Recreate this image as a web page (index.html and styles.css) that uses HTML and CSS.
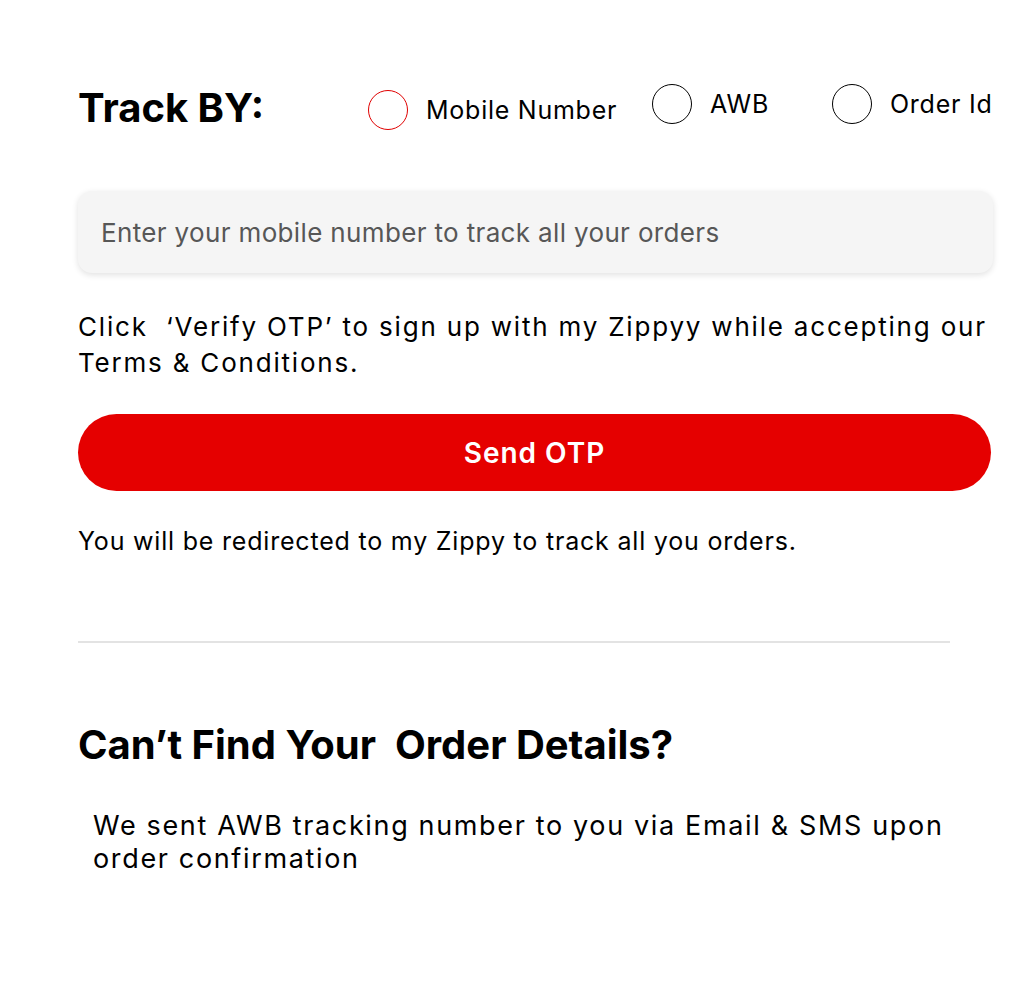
FILE: index.html
```html
<!DOCTYPE html>
<html lang="en">
<head>
<meta charset="utf-8">
<title>Track Order</title>
<link rel="stylesheet" href="styles.css">
</head>
<body>
<main class="page">
  <section class="track-row">
    <h1 class="track-title">Track BY:</h1>
    <label class="option option--mobile"><span class="radio radio--active"></span><span class="option-label">Mobile Number</span></label>
    <label class="option"><span class="radio"></span><span class="option-label">AWB</span></label>
    <label class="option"><span class="radio"></span><span class="option-label">Order Id</span></label>
  </section>

  <div class="field">
    <span class="placeholder">Enter your mobile number to track all your orders</span>
  </div>

  <p class="terms">Click &nbsp;‘Verify OTP’ to sign up with my Zippyy while accepting our Terms &amp; Conditions.</p>

  <button class="send-btn" type="button">Send OTP</button>

  <p class="redirect">You will be redirected to my Zippy to track all you orders.</p>

  <hr class="divider">

  <h2 class="help-title">Can’t Find Your &nbsp;Order Details?</h2>
  <p class="help-text">We sent AWB tracking number to you via Email &amp; SMS upon order confirmation</p>
</main>
</body>
</html>
```

FILE: styles.css
```css
* { box-sizing: border-box; }
html, body { margin: 0; padding: 0; background: #fff; }
body {
  font-family: Inter, "Noto Sans", "Liberation Sans", sans-serif;
  color: #000;
}
.page {
  padding: 84px 0 0 78px;
  width: 1000px;
}
.track-row {
  display: grid;
  grid-template-columns: 290px 284px 180px auto;
  align-items: start;
}
.track-title {
  margin: 0;
  font-size: 40px;
  line-height: 48px;
  font-weight: 700;
}
.option {
  display: flex;
  align-items: center;
  gap: 18px;
  height: 40px;
}
.option--mobile { margin-top: 6px; }
.radio {
  width: 40px;
  height: 40px;
  border-radius: 50%;
  border: 1.5px solid #000;
  flex: none;
}
.radio--active { border-color: #e00000; }
.option-label {
  font-size: 25px;
  line-height: 30px;
  font-weight: 400;
  letter-spacing: 0.75px;
  white-space: nowrap;
}
.field {
  margin-top: 59px;
  height: 82px;
  width: 915px;
  background: #f5f5f5;
  border-radius: 14px;
  box-shadow: 0 2px 6px rgba(0, 0, 0, 0.12);
  display: flex;
  align-items: center;
  padding-left: 23px;
}
.placeholder {
  font-size: 26px;
  letter-spacing: 0.35px;
  color: #575757;
}
.terms {
  margin: 36px 0 0;
  font-size: 26px;
  line-height: 36px;
  letter-spacing: 1.8px;
  width: 915px;
}
.send-btn {
  display: block;
  margin-top: 33px;
  width: 913px;
  height: 77px;
  border: none;
  border-radius: 39px;
  background: #e50000;
  color: #fff;
  font-family: inherit;
  font-size: 28px;
  font-weight: 600;
  letter-spacing: 1px;
}
.redirect {
  margin: 35px 0 0;
  font-size: 25px;
  line-height: 30px;
  letter-spacing: 0.8px;
}
.divider {
  margin: 85px 0 0;
  width: 872px;
  height: 2px;
  border: none;
  background: #e3e3e3;
}
.help-title {
  margin: 78px 0 0;
  font-size: 40px;
  line-height: 48px;
  font-weight: 700;
}
.help-text {
  margin: 40px 0 0 15px;
  font-size: 27px;
  line-height: 33px;
  letter-spacing: 1.65px;
  width: 880px;
}
```
